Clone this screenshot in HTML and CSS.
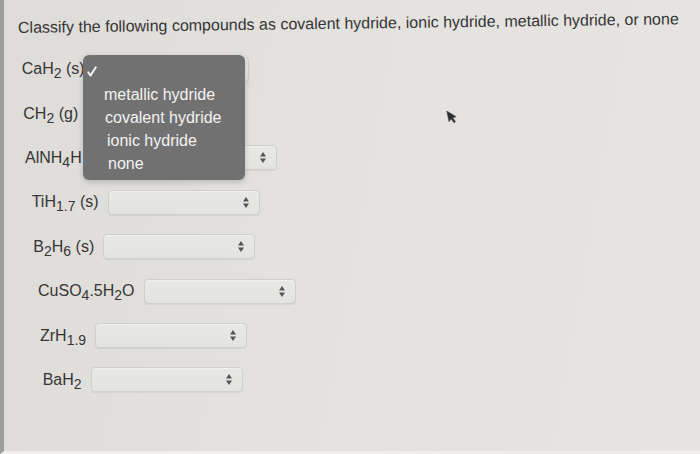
FILE: index.html
```html
<!DOCTYPE html>
<html>
<head>
<meta charset="utf-8">
<link rel="stylesheet" href="styles.css">
</head>
<body>
<div class="page">
  <div class="sheet">
    <p class="title">Classify the following compounds as covalent hydride, ionic hydride, metallic hydride, or none</p>
    <div class="rows">
      <div class="row">
        <span class="label">CaH<sub>2</sub> (s)</span>
        <div class="select"><svg class="arrows" viewBox="0 0 6 11" width="6" height="11"><path d="M0 4.5 L3 0 L6 4.5 Z M0 6.5 L6 6.5 L3 11 Z"/></svg></div>
      </div>
      <div class="row">
        <span class="label">CH<sub>2</sub> (g)</span>
        <div class="select"><svg class="arrows" viewBox="0 0 6 11" width="6" height="11"><path d="M0 4.5 L3 0 L6 4.5 Z M0 6.5 L6 6.5 L3 11 Z"/></svg></div>
      </div>
      <div class="row">
        <span class="label">AlNH<sub>4</sub>H</span>
        <div class="select"><svg class="arrows" viewBox="0 0 6 11" width="6" height="11"><path d="M0 4.5 L3 0 L6 4.5 Z M0 6.5 L6 6.5 L3 11 Z"/></svg></div>
      </div>
      <div class="row">
        <span class="label">TiH<sub>1.7</sub> (s)</span>
        <div class="select"><svg class="arrows" viewBox="0 0 6 11" width="6" height="11"><path d="M0 4.5 L3 0 L6 4.5 Z M0 6.5 L6 6.5 L3 11 Z"/></svg></div>
      </div>
      <div class="row">
        <span class="label">B<sub>2</sub>H<sub>6</sub> (s)</span>
        <div class="select"><svg class="arrows" viewBox="0 0 6 11" width="6" height="11"><path d="M0 4.5 L3 0 L6 4.5 Z M0 6.5 L6 6.5 L3 11 Z"/></svg></div>
      </div>
      <div class="row">
        <span class="label">CuSO<sub>4</sub>.5H<sub>2</sub>O</span>
        <div class="select"><svg class="arrows" viewBox="0 0 6 11" width="6" height="11"><path d="M0 4.5 L3 0 L6 4.5 Z M0 6.5 L6 6.5 L3 11 Z"/></svg></div>
      </div>
      <div class="row">
        <span class="label">ZrH<sub>1.9</sub></span>
        <div class="select"><svg class="arrows" viewBox="0 0 6 11" width="6" height="11"><path d="M0 4.5 L3 0 L6 4.5 Z M0 6.5 L6 6.5 L3 11 Z"/></svg></div>
      </div>
      <div class="row">
        <span class="label">BaH<sub>2</sub></span>
        <div class="select"><svg class="arrows" viewBox="0 0 6 11" width="6" height="11"><path d="M0 4.5 L3 0 L6 4.5 Z M0 6.5 L6 6.5 L3 11 Z"/></svg></div>
      </div>
    </div>
  </div>

  <ul class="menu">
    <li class="item checked"><svg class="check" viewBox="0 0 10 11" width="10" height="11"><path d="M1.2 6.2 L3.6 9.6 L8.8 1.2" fill="none" stroke="#f5f5f5" stroke-width="1.9" stroke-linecap="round" stroke-linejoin="round"/></svg></li>
    <li class="item i1">metallic hydride</li>
    <li class="item i2">covalent hydride</li>
    <li class="item i3">ionic hydride</li>
    <li class="item i4">none</li>
  </ul>

  <svg class="cursor" viewBox="0 0 10 15" width="10" height="15"><path d="M1 1 L1 12 L3.6 9.6 L5.6 14 L7.4 13.2 L5.4 8.9 L9 8.6 Z" fill="#2a2a2a" stroke="#555" stroke-width="0.6" stroke-linejoin="round"/></svg>
</div>
</body>
</html>
```

FILE: styles.css
```css
* { box-sizing: border-box; }

html, body {
  margin: 0;
  padding: 0;
  width: 700px;
  height: 454px;
  overflow: hidden;
}

body {
  font-family: "Liberation Sans", Arial, sans-serif;
  color: #3a3a3a;
}

.page {
  position: relative;
  width: 700px;
  height: 454px;
  background: linear-gradient(100deg, #dddcd8 0%, #e3e2de 45%, #e6e5e1 100%);
  border-left: 4px solid #9c9c9a;
  border-bottom: 3px solid #efeeeb;
}

.sheet {
  padding-top: 19px;
}

.title {
  margin: 0 0 10px 14px;
  font-size: 16px;
  line-height: 18px;
  height: 18px;
  white-space: nowrap;
  color: #353535;
  transform: rotate(-0.75deg);
  transform-origin: 0 50%;
}

.rows {
  display: flex;
  flex-direction: column;
}

.row {
  display: flex;
  align-items: center;
  gap: 9px;
  height: 44.4px;
}

.row:nth-child(1) { margin-left: 17.7px; }
.row:nth-child(2) { margin-left: 19.3px; }
.row:nth-child(3) { margin-left: 21px; }
.row:nth-child(4) { margin-left: 27.7px; }
.row:nth-child(5) { margin-left: 29.3px; }
.row:nth-child(6) { margin-left: 34px; }
.row:nth-child(7) { margin-left: 36px; }
.row:nth-child(8) { margin-left: 38.7px; }

.row:nth-child(1) .select { margin-left: 3px; }
.row:nth-child(3) .select { margin-left: 34px; }

.label {
  font-size: 16px;
  line-height: 18px;
  white-space: nowrap;
  color: #353535;
}

.label sub {
  font-size: 14px;
  line-height: 0;
  vertical-align: -4px;
}

.select {
  width: 152px;
  height: 25px;
  border-radius: 4px;
  border: 1px solid #d0cfcc;
  background: linear-gradient(#e8e8e6, #e3e3e1);
  box-shadow: 0 1px 1px rgba(0, 0, 0, 0.06), inset 0 1px 0 rgba(255, 255, 255, 0.35);
  display: flex;
  align-items: center;
  justify-content: flex-end;
  padding-right: 10px;
}

.arrows {
  fill: #555555;
}

.menu {
  position: absolute;
  left: 79px;
  top: 55px;
  width: 162px;
  height: 125px;
  margin: 0;
  padding: 5px 0;
  list-style: none;
  background: #717171;
  border-radius: 6px;
  box-shadow: 0 2px 6px rgba(0, 0, 0, 0.18);
  color: #f3f3f3;
  font-size: 16px;
}

.item {
  height: 23px;
  line-height: 23px;
  padding-left: 21px;
  white-space: nowrap;
}

.item.i2 { padding-left: 22px; }
.item.i3 { padding-left: 24px; }
.item.i4 { padding-left: 25px; }

.item.checked {
  display: flex;
  align-items: center;
  padding-left: 4px;
}

.check {
  display: block;
}

.cursor {
  position: absolute;
  left: 443px;
  top: 109px;
  transform: rotate(-12deg);
}
```
